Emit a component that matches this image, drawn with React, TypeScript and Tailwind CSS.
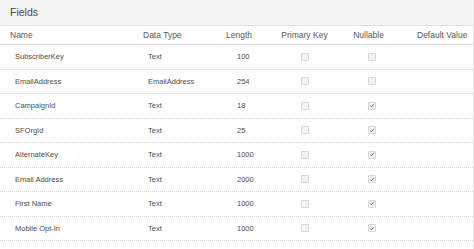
const fields = [
  { name: 'SubscriberKey', type: 'Text', length: '100', pk: false, nullable: false },
  { name: 'EmailAddress', type: 'EmailAddress', length: '254', pk: false, nullable: false },
  { name: 'CampaignId', type: 'Text', length: '18', pk: false, nullable: true },
  { name: 'SFOrgId', type: 'Text', length: '25', pk: false, nullable: true },
  { name: 'AlternateKey', type: 'Text', length: '1000', pk: false, nullable: true },
  { name: 'Email Address', type: 'Text', length: '2000', pk: false, nullable: true },
  { name: 'First Name', type: 'Text', length: '1000', pk: false, nullable: true },
  { name: 'Mobile Opt-In', type: 'Text', length: '1000', pk: false, nullable: true },
];

const cols = 'grid grid-cols-[138px_83px_50px_67px_67px_1fr]';

function Box({ checked }: { checked: boolean }) {
  return (
    <span className="inline-flex h-[8px] w-[8px] items-center justify-center rounded-[1px] border border-[#d8d8d8] bg-[#f3f3f3]">
      {checked && (
        <svg viewBox="0 0 8 8" className="h-[7px] w-[7px]">
          <path d="M1.6 4.2 L3.2 5.8 L6.4 1.8" fill="none" stroke="#707070" strokeWidth="1.3" />
        </svg>
      )}
    </span>
  );
}

export default function App() {
  return (
    <div className="h-[249px] w-[474px] overflow-hidden border-r border-[#e3e3e3] bg-white font-['Liberation_Sans',Arial,sans-serif]">
      <div className="flex h-[26px] items-center border-b border-[#e0e0e0] bg-[#f5f5f5] pl-[10px] text-[10.5px] text-[#4a4a4a]">
        Fields
      </div>
      <div className={`${cols} h-[19px] items-center border-b border-[#e0e0e0] text-[8.5px] text-[#595959]`}>
        <div className="pl-[10px]">Name</div>
        <div className="pl-[5px]">Data Type</div>
        <div className="pl-[5px]">Length</div>
        <div className="text-center">Primary Key</div>
        <div className="pr-[6px] text-center">Nullable</div>
        <div className="pl-[12px]">Default Value</div>
      </div>
      {fields.map((f) => (
        <div
          key={f.name}
          className={`${cols} h-[24.5px] items-center border-b border-dotted border-[#d6d6d6] text-[7.5px] text-[#4e4e4e]`}
        >
          <div className="pl-[15px]">{f.name}</div>
          <div className="pl-[10px]">{f.type}</div>
          <div className="pl-[16px]">{f.length}</div>
          <div className="flex justify-center">
            <Box checked={f.pk} />
          </div>
          <div className="flex justify-center">
            <Box checked={f.nullable} />
          </div>
          <div />
        </div>
      ))}
    </div>
  );
}
